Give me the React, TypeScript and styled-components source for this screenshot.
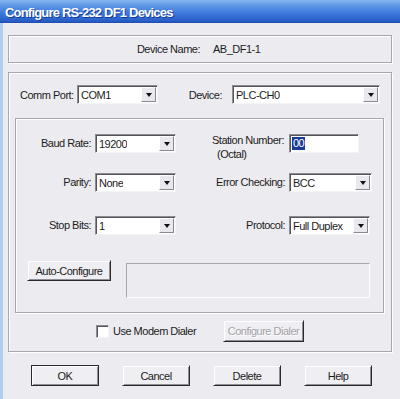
import {FC} from 'react'
import styled, {createGlobalStyle} from 'styled-components'

const GlobalStyle = createGlobalStyle`
  html, body {
    margin: 0;
    padding: 0;
  }

  body {
    width: 400px;
    height: 399px;
    overflow: hidden;
    background: #ecebf0;
    font-family: "Liberation Sans", Arial, sans-serif;
    font-size: 11px;
    letter-spacing: -0.5px;
    color: #1c1c1c;
    white-space: nowrap;
  }
`

interface ISelectProps {
  value: string
  width: number
}

const Select: FC<ISelectProps> = ({value, width}) => {
  return (
    <SelectBox $width={width}>
      <SelectValue>{value}</SelectValue>
      <ArrowButton>
        <Arrow />
      </ArrowButton>
    </SelectBox>
  )
}

const App: FC = () => {
  return (
    <Window>
      <GlobalStyle />
      <TitleBar>Configure RS-232 DF1 Devices</TitleBar>
      <Frame>
        <DeviceBox>
          <DeviceLabel>Device Name:</DeviceLabel>
          <DeviceValue>AB_DF1-1</DeviceValue>
        </DeviceBox>

        <MainBox>
          <CommRow>
            <RowLabel $width={57}>Comm Port:</RowLabel>
            <Select value="COM1" width={81} />
            <RowLabel $width={74} $right>Device:</RowLabel>
            <Select value="PLC-CH0" width={148} />
          </CommRow>

          <InnerBox>
            <FieldGrid>
              <FieldLabel>Baud Rate:</FieldLabel>
              <Select value="19200" width={81} />
              <StationLabel>
                <span>Station Number:</span>
                <Octal>(Octal)</Octal>
              </StationLabel>
              <TextInput>
                <Selected>00</Selected>
              </TextInput>

              <FieldLabel>Parity:</FieldLabel>
              <Select value="None" width={81} />
              <FieldLabel>Error Checking:</FieldLabel>
              <Select value="BCC" width={83} />

              <FieldLabel>Stop Bits:</FieldLabel>
              <Select value="1" width={81} />
              <FieldLabel>Protocol:</FieldLabel>
              <Select value="Full Duplex" width={81} />
            </FieldGrid>

            <AutoRow>
              <Button $width={84}>Auto-Configure</Button>
              <StatusBox />
            </AutoRow>
          </InnerBox>

          <ModemRow>
            <CheckBox />
            <CheckLabel>Use Modem Dialer</CheckLabel>
            <Button $width={81} $height={22} $disabled>
              Configure Dialer
            </Button>
          </ModemRow>
        </MainBox>

        <ButtonRow>
          <Button $width={68} $default>OK</Button>
          <Button $width={68}>Cancel</Button>
          <Button $width={68}>Delete</Button>
          <Button $width={68}>Help</Button>
        </ButtonRow>
      </Frame>
    </Window>
  )
}

const Window = styled.div`
  width: 400px;
  height: 399px;
  display: flex;
  flex-direction: column;
`

const TitleBar = styled.div`
  height: 23px;
  flex-shrink: 0;
  display: flex;
  align-items: center;
  padding-left: 5px;
  padding-top: 1px;
  box-sizing: border-box;
  background: linear-gradient(#86b6ee 0%, #5d97e6 25%, #3a76da 60%, #2a5fc8 90%, #1d4cae 100%);
  color: #fff;
  font-family: "Liberation Sans", Arial, sans-serif;
  font-weight: bold;
  font-size: 13px;
  letter-spacing: -0.8px;
  text-shadow: 1px 1px 0 #153d96;
`

const Frame = styled.div`
  flex: 1;
  display: flex;
  flex-direction: column;
  border-left: 3px solid #b3cdf1;
  padding: 12px 8px 0 5px;
`

const Etched = styled.div`
  box-sizing: border-box;
  border: 1px solid #a8a6ae;
  box-shadow: inset 1px 1px 0 #fff, 1px 1px 0 #fff;
`

const DeviceBox = styled(Etched)`
  height: 28px;
  display: flex;
  align-items: center;
`

const DeviceLabel = styled.span`
  width: 191px;
  text-align: right;
`

const DeviceValue = styled.span`
  margin-left: 13px;
`

const MainBox = styled(Etched)`
  margin-top: 9px;
  height: 280px;
  padding: 12px 0 0 11px;
  display: flex;
  flex-direction: column;
`

const CommRow = styled.div`
  display: flex;
  align-items: center;
  height: 19px;
`

const RowLabel = styled.span<{$width: number; $right?: boolean}>`
  width: ${p => p.$width}px;
  box-sizing: border-box;
  text-align: ${p => (p.$right ? 'right' : 'left')};
  padding-right: ${p => (p.$right ? 10 : 0)}px;
`

const InnerBox = styled(Etched)`
  margin: 14px 0 0 -5px;
  width: 369px;
  height: 195px;
  padding-top: 15px;
`

const FieldGrid = styled.div`
  display: grid;
  grid-template-columns: 75px 81px 105px auto;
  grid-template-rows: 39px 43px 19px;
  column-gap: 4px;
  align-items: start;
`

const FieldLabel = styled.span`
  line-height: 19px;
  text-align: right;
`

const StationLabel = styled.span`
  display: flex;
  flex-direction: column;
  align-items: flex-start;
  padding-left: 32px;
  margin-top: -1px;
  line-height: 14px;
`

const Octal = styled.span`
  padding-left: 5px;
`

const Sunken = styled.div`
  box-sizing: border-box;
  height: 19px;
  background: #fff;
  border-style: solid;
  border-width: 1px;
  border-color: #8d8c92 #f4f4f6 #f4f4f6 #8d8c92;
  box-shadow: inset 1px 1px 0 #55545a;
`

const SelectBox = styled(Sunken)<{$width: number}>`
  width: ${p => p.$width}px;
  display: flex;
  align-items: center;
  justify-content: space-between;
  padding: 1px 1px 1px 3px;
`

const SelectValue = styled.span`
  overflow: hidden;
`

const ArrowButton = styled.div`
  width: 15px;
  height: 15px;
  box-sizing: border-box;
  display: flex;
  align-items: center;
  justify-content: center;
  background: #e9e8ee;
  border: 1px solid;
  border-color: #fff #8a8990 #8a8990 #fff;
`

const Arrow = styled.div`
  width: 0;
  height: 0;
  border-left: 3px solid transparent;
  border-right: 3px solid transparent;
  border-top: 4px solid #111;
`

const TextInput = styled(Sunken)`
  width: 70px;
  display: flex;
  align-items: center;
  padding-left: 2px;
`

const Selected = styled.span`
  background: #1a3b96;
  color: #fff;
  line-height: 13px;
  padding: 0 1px;
`

const AutoRow = styled.div`
  display: flex;
  align-items: flex-start;
  margin: 25px 0 0 11px;
`

const Button = styled.div<{$width: number; $height?: number; $default?: boolean; $disabled?: boolean}>`
  width: ${p => p.$width}px;
  height: ${p => p.$height ?? 21}px;
  box-sizing: border-box;
  display: flex;
  align-items: center;
  justify-content: center;
  background: #efeef2;
  border: 1px solid ${p => (p.$default ? '#2a2a2e' : '#eceaf0')};
  border-right-color: #2a2a2e;
  border-bottom-color: #2a2a2e;
  box-shadow: inset 1px 1px 0 #fff, inset -1px -1px 0 #8f8e95;
  color: ${p => (p.$disabled ? '#a2a1a8' : '#1c1c1c')};
  text-shadow: ${p => (p.$disabled ? '1px 1px 0 #fff' : 'none')};
`

const StatusBox = styled(Etched)`
  margin: 3px 0 0 15px;
  width: 244px;
  height: 35px;
  border-color: #a8a6ae #fff #fff #a8a6ae;
  box-shadow: none;
`

const ModemRow = styled.div`
  display: flex;
  align-items: center;
  height: 22px;
  margin: 7px 0 0 76px;
`

const CheckBox = styled(Sunken)`
  width: 13px;
  height: 13px;
`

const CheckLabel = styled.span`
  width: 114px;
  padding-left: 4px;
  box-sizing: border-box;
`

const ButtonRow = styled.div`
  display: flex;
  gap: 23px;
  margin: 13px 0 0 23px;
`

export default App
